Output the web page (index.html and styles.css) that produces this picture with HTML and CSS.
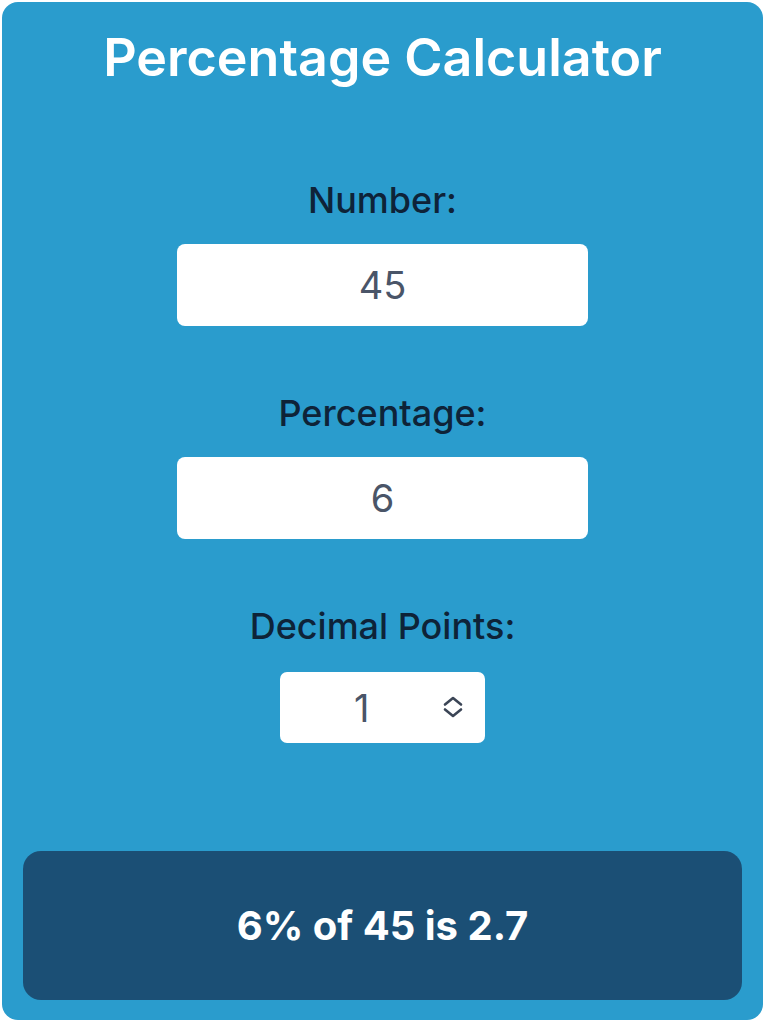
FILE: index.html
```html
<!DOCTYPE html>
<html lang="en">
<head>
  <meta charset="UTF-8" />
  <meta name="viewport" content="width=device-width, initial-scale=1" />
  <title>Percentage Calculator</title>
  <link rel="stylesheet" href="styles.css">
</head>
<body>
  <div class="card">
    <h1>Percentage Calculator</h1>

    <div class="field">
      <label for="number">Number:</label>
      <input id="number" type="text" value="45">
    </div>

    <div class="field">
      <label for="percent">Percentage:</label>
      <input id="percent" type="text" value="6">
    </div>

    <div class="field">
      <label for="decimals">Decimal Points:</label>
      <div class="select-wrap">
        <select id="decimals">
          <option>0</option>
          <option selected>1</option>
          <option>2</option>
          <option>3</option>
        </select>
        <!-- up/down arrows for the select -->
        <svg class="chevrons" width="24" height="22" viewBox="0 0 24 22" fill="none" stroke="#3b4556" stroke-width="2.6" stroke-linecap="round" stroke-linejoin="round">
          <path d="M4 8.5l8-6.5 8 6.5" />
          <path d="M4 13.5l8 6.5 8-6.5" />
        </svg>
      </div>
    </div>

    <div class="result" id="result">6% of 45 is 2.7</div>
  </div>
</body>
</html>
```

FILE: styles.css
```css
body {
  margin: 0;
  background: #fff;
  font-family: 'Inter', 'Noto Sans', sans-serif;
}
.card {
  box-sizing: border-box;
  margin: 2px;
  width: 761px;
  height: 1018px;
  padding: 24px 21px 20px;
  background: #2a9ccd;
  border-radius: 16px;
  display: flex;
  flex-direction: column;
  align-items: center;
}
h1 {
  margin: 0;
  font-size: 52px;
  line-height: 64px;
  font-weight: 600;
  color: #fff;
  letter-spacing: 0;
}
.field {
  display: flex;
  flex-direction: column;
  align-items: center;
  gap: 24px;
  margin-top: 90px;
}
.field + .field {
  margin-top: 67px;
}
label {
  font-size: 36px;
  line-height: 40px;
  font-weight: 500;
  color: #0e2338;
}
input {
  box-sizing: border-box;
  width: 411px;
  height: 82px;
  border: none;
  border-radius: 8px;
  background: #fff;
  text-align: center;
  font-family: inherit;
  font-size: 38px;
  color: #4a5568;
  outline: none;
}
.select-wrap {
  position: relative;
  margin-top: 2px;
}
select {
  box-sizing: border-box;
  width: 205px;
  height: 71px;
  border: none;
  border-radius: 7px;
  background: #fff;
  appearance: none;
  padding: 0 0 0 74px;
  font-family: inherit;
  font-size: 38px;
  color: #4a5568;
  outline: none;
}
.chevrons {
  position: absolute;
  right: 20px;
  top: 24px;
  pointer-events: none;
}
.result {
  box-sizing: border-box;
  margin-top: auto;
  width: 719px;
  height: 149px;
  border-radius: 18px;
  background: #1b4f75;
  display: flex;
  align-items: center;
  justify-content: center;
  color: #fff;
  font-size: 40px;
  font-weight: 700;
}
```
